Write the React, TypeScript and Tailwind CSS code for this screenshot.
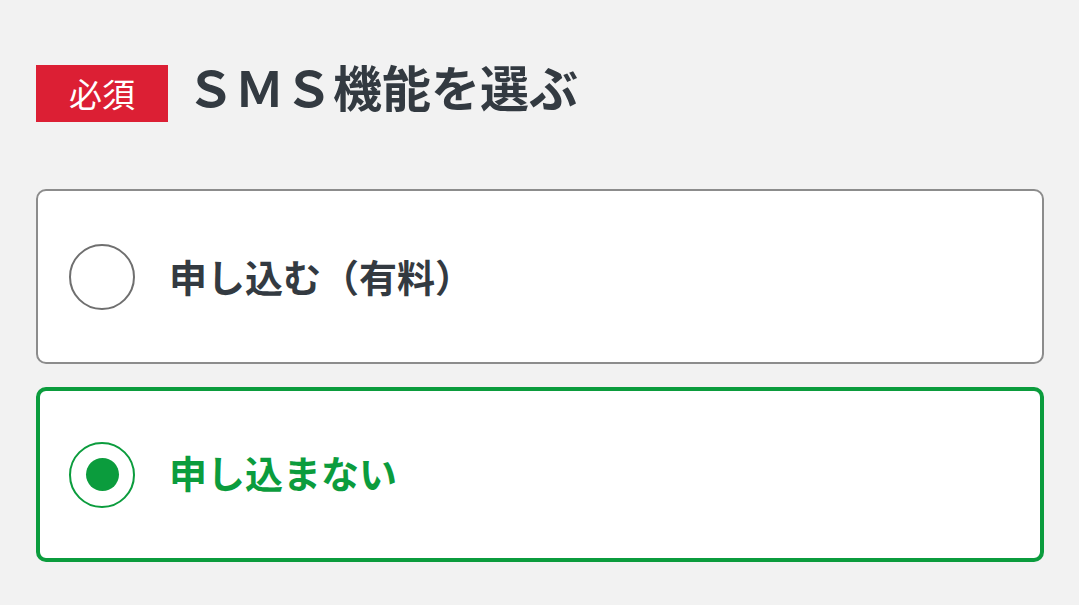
import React from "react";

export default function App() {
  return (
    <div
      className="w-[1079px] h-[605px] bg-[#f2f2f2] overflow-hidden"
      style={{ fontFamily: '"Noto Sans CJK JP", "Noto Sans", sans-serif' }}
    >
      <div className="pl-[36px] pr-[35px] pt-[65px]">
        <div className="flex items-center">
          <div className="w-[132px] h-[57px] bg-[#dc1f34] flex items-center justify-center text-white text-[33px] leading-none">
            必須
          </div>
          <h1 className="ml-[18px] text-[49px] leading-none font-bold text-[#333a41] -mt-[16px]">
            ＳＭＳ機能を選ぶ
          </h1>
        </div>

        <div className="mt-[67px] flex flex-col gap-[23px]">
          <label className="h-[175px] bg-white border-2 border-[#8c8c8c] rounded-[10px] flex items-center pl-[31px]">
            <span className="w-[66px] h-[66px] rounded-full border-2 border-[#6f6f6f] bg-white shrink-0" />
            <span className="ml-[34px] text-[38px] leading-none font-bold text-[#333a41] -mt-[2px]">
              申し込む（有料）
            </span>
          </label>

          <label className="h-[175px] bg-white border-4 border-[#0b9c3d] rounded-[10px] flex items-center pl-[29px]">
            <span className="w-[66px] h-[66px] rounded-full border-2 border-[#0b9c3d] bg-white shrink-0 flex items-center justify-center">
              <span className="w-[33px] h-[33px] rounded-full bg-[#0b9c3d]" />
            </span>
            <span className="ml-[34px] text-[38px] leading-none font-bold text-[#0b9c3d] -mt-[6px]">
              申し込まない
            </span>
          </label>
        </div>
      </div>
    </div>
  );
}
